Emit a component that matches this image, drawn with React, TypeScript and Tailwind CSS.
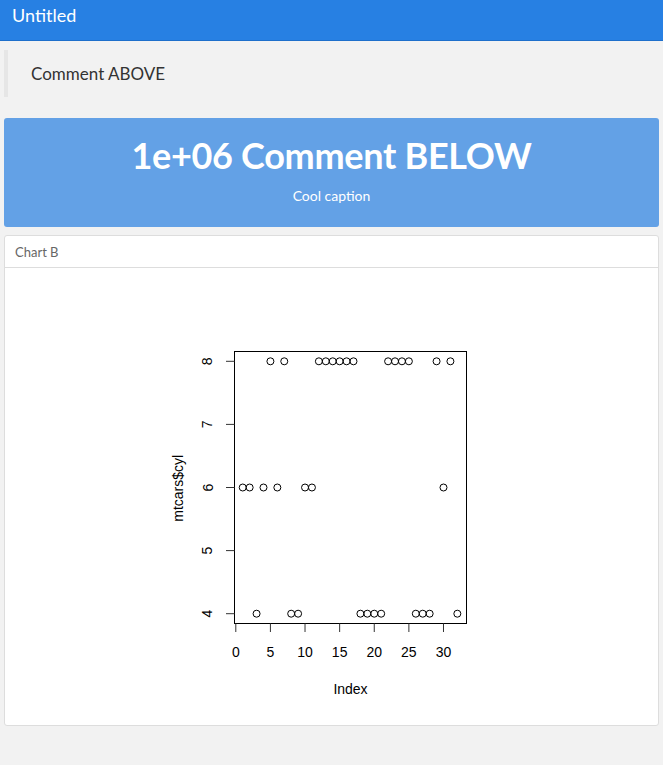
import React from 'react';

const cyl = [6, 6, 4, 6, 8, 6, 8, 4, 4, 6, 6, 8, 8, 8, 8, 8, 8, 4, 4, 4, 4, 8, 8, 8, 8, 4, 4, 4, 8, 6, 8, 4];

const px = (i: number) => 230.8 + i * 6.923;
const py = (v: number) => 93.3 + (8 - v) * 63.1;

const ScatterPlot = () => (
  <svg width="653" height="457" viewBox="0 0 653 457" style={{ fontFamily: '"Liberation Sans", Arial, sans-serif' }}>
    <rect x="229.5" y="83.5" width="232" height="272" fill="none" stroke="#000" strokeWidth="1" />
    {cyl.map((v, i) => (
      <circle key={i} cx={px(i + 1)} cy={py(v)} r="3.5" fill="none" stroke="#000" strokeWidth="1" />
    ))}
    {/* y axis */}
    {[4, 5, 6, 7, 8].map((v) => (
      <g key={v}>
        <line x1="221" y1={py(v)} x2="229.5" y2={py(v)} stroke="#333" />
        <text x="207.5" y={py(v)} fontSize="14" textAnchor="middle" transform={`rotate(-90 207.5 ${py(v)})`}>
          {v}
        </text>
      </g>
    ))}
    {/* x axis */}
    {[0, 5, 10, 15, 20, 25, 30].map((t) => (
      <g key={t}>
        <line x1={px(t)} y1="355.5" x2={px(t)} y2="364" stroke="#333" />
        <text x={px(t)} y="389.3" fontSize="14" textAnchor="middle">
          {t}
        </text>
      </g>
    ))}
    <text x="345.5" y="426" fontSize="14" textAnchor="middle">Index</text>
    <text x="178" y="220.3" fontSize="14" textAnchor="middle" transform="rotate(-90 178 220.3)">
      mtcars$cyl
    </text>
  </svg>
);

export default function App() {
  return (
    <div className="min-h-[765px] bg-[#f2f2f2] font-['Lato','Open_Sans',sans-serif]">
      {/* Navbar */}
      <div className="h-[41px] bg-[#2780e3] border-b border-[#1e6fcb] flex items-center px-3">
        <span className="text-[18px] text-white leading-none -mt-[10px]">Untitled</span>
      </div>

      <div className="px-1 pt-[9px] flex flex-col">
        {/* Comment */}
        <div className="h-[47px] border-l-[4px] border-[#e6e6e6] flex items-center pl-[23px]">
          <span className="text-[17px] text-[#333]">Comment ABOVE</span>
        </div>

        {/* Value box */}
        <div className="mt-[21px] h-[109px] rounded-[3px] bg-[#63a1e6] flex flex-col items-center text-white">
          <div className="mt-[16px] text-[36px] font-bold leading-[42px] tracking-[-0.3px]">1e+06 Comment BELOW</div>
          <div className="mt-[11px] text-[14px] leading-[18px]">Cool caption</div>
        </div>

        {/* Chart card */}
        <div className="mt-[8px] h-[491px] bg-white border border-[#dddddd] rounded-[3px] flex flex-col">
          <div className="h-[32px] border-b border-[#dddddd] flex items-center px-[10px] pt-[3px]">
            <span className="text-[13px] text-[#666]">Chart B</span>
          </div>
          <div className="flex-1">
            <ScatterPlot />
          </div>
        </div>
      </div>
    </div>
  );
}
